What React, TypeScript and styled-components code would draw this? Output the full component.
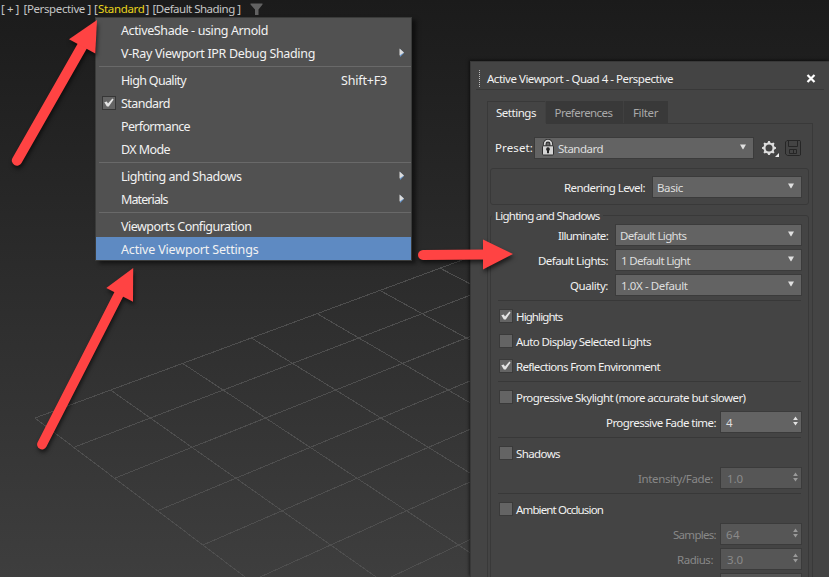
import React, { useLayoutEffect, useRef, useState } from "react";
import styled, { createGlobalStyle, css } from "styled-components";

const GlobalStyle = createGlobalStyle`
  body { margin: 0; background: #2c2c2c; }
  * { box-sizing: border-box; }
`;

/* ---------- text set to an exact measure ---------- */

const TextSpan = styled.span<{ $w: number; $ls: number }>`
  display: block;
  flex: none;
  width: ${(p) => p.$w}px;
  letter-spacing: ${(p) => p.$ls}px;
  white-space: pre;
`;

function Label({ w, children }: { w: number; children: string }) {
  const ref = useRef<HTMLSpanElement>(null);
  const [ls, setLs] = useState(0);
  useLayoutEffect(() => {
    if (!ref.current) return;
    const range = document.createRange();
    range.selectNodeContents(ref.current);
    const natural = range.getBoundingClientRect().width;
    const target = w > 30 ? w - 1 : w;
    setLs((target - natural) / children.length);
  }, []);
  return (
    <TextSpan ref={ref} $w={w} $ls={ls}>
      {children}
    </TextSpan>
  );
}

/* ---------- viewport ---------- */

const Viewport = styled.main`
  position: relative;
  width: 829px;
  height: 577px;
  overflow: hidden;
  background: linear-gradient(#1b1b1b, #3e3e3e);
  font-family: "Noto Sans", "DejaVu Sans", sans-serif;
  font-size: 11.5px;
  line-height: 18px;
  color: #f2f2f2;
`;

const Layer = styled.svg`
  position: absolute;
  inset: 0;
  pointer-events: none;
`;

const ViewportLabels = styled.header`
  position: relative;
  display: flex;
  height: 18px;
  padding-left: 1px;
  font-size: 11.5px;
  color: #c6c6c6;
`;

const LabelPart = styled.div<{ $gap: number; $active?: boolean }>`
  display: flex;
  margin-right: ${(p) => p.$gap}px;
  b { font-weight: 400; color: #ead51c; }
`;

const FunnelIcon = styled.svg`
  margin: 3px 0 0 -1px;
`;

function gridPoint(i: number, j: number): [number, number] {
  const m = j - i;
  const w = 1 - 0.0245 * m;
  return [(35 + 78.3 * i + 37 * j) / w, (418 + 18.4 * m) / w];
}

function Grid() {
  const lines: [number, number, number, number][] = [];
  for (let k = 0; k <= 12; k++) {
    lines.push([...gridPoint(k, 0), ...gridPoint(k, 12)]);
    lines.push([...gridPoint(0, k), ...gridPoint(12, k)]);
  }
  return (
    <Layer width="829" height="577" shapeRendering="crispEdges">
      {lines.map(([x1, y1, x2, y2], n) => (
        <line key={n} x1={x1} y1={y1} x2={x2} y2={y2} stroke="#4e4e4e" strokeWidth="1" />
      ))}
    </Layer>
  );
}

/* ---------- shading menu ---------- */

const Menu = styled.ul`
  position: absolute;
  left: 95px;
  top: 17px;
  width: 317px;
  margin: 0;
  padding: 0;
  list-style: none;
  border: 1px solid #3a3b3a;
  background: #515151;
  box-shadow: 4px 3px 4px rgba(0, 0, 0, 0.5);
  font-size: 12.5px;
  line-height: 23px;
`;

const MenuItem = styled.li<{ $hot?: boolean }>`
  display: flex;
  align-items: center;
  height: 23px;
  padding: 1px 6px 0 0;
  background: ${(p) => (p.$hot ? "#5e8ac2" : "transparent")};
`;

const MenuGutter = styled.div`
  flex: none;
  width: 25px;
  padding-left: 6px;
`;

const MenuSpacer = styled.div`
  flex: 1;
`;

const Shortcut = styled.div`
  margin-right: 17px;
`;

const MenuRule = styled.li`
  height: 4px;
  padding: 2px 0 0 3px;
  &::after {
    content: "";
    display: block;
    height: 1px;
    background: #696969;
  }
`;

const CheckBox = styled.div<{ $menu?: boolean }>`
  flex: none;
  width: 14px;
  height: 14px;
  border: 1px solid ${(p) => (p.$menu ? "#363636" : "#3a3a3a")};
  background: #646464;
  svg { display: block; }
`;

function Check({ on, menu }: { on?: boolean; menu?: boolean }) {
  return (
    <CheckBox $menu={menu}>
      {on && (
        <svg width="12" height="12" viewBox="0 0 12 12">
          <path d="M1.3 5.2 L3.8 4.6 L5 6.4 L9.4 1.6 L10.6 2.4 L5.8 9.4 L3.9 9.4 Z" fill="#e4e4e4" />
        </svg>
      )}
    </CheckBox>
  );
}

function SubmenuArrow() {
  return (
    <svg width="6" height="10" viewBox="0 0 6 10">
      <path d="M1 1 L5 5 L1 9 Z" fill="#6a9ad2" />
      <path d="M0.5 0.5 L5 4.6 L0.5 7.5 Z" fill="#dcdcdc" />
    </svg>
  );
}

type Entry = { text: string; w: number; sub?: boolean; key?: string; checked?: boolean; hot?: boolean } | null;

const entries: Entry[] = [
  { text: "ActiveShade - using Arnold", w: 148 },
  { text: "V-Ray Viewport IPR Debug Shading", w: 195, sub: true },
  null,
  { text: "High Quality", w: 66, key: "Shift+F3" },
  { text: "Standard", w: 50, checked: true },
  { text: "Performance", w: 70 },
  { text: "DX Mode", w: 50 },
  null,
  { text: "Lighting and Shadows", w: 121.5, sub: true },
  { text: "Materials", w: 47.5, sub: true },
  null,
  { text: "Viewports Configuration", w: 131.5 },
  { text: "Active Viewport Settings", w: 138.5, hot: true },
];

function ShadingMenu() {
  return (
    <Menu>
      {entries.map((e, n) =>
        e === null ? (
          <MenuRule key={n} />
        ) : (
          <MenuItem key={n} $hot={e.hot}>
            <MenuGutter>{e.checked && <Check on menu />}</MenuGutter>
            <Label w={e.w}>{e.text}</Label>
            <MenuSpacer />
            {e.key && (
              <Shortcut>
                <Label w={47}>{e.key}</Label>
              </Shortcut>
            )}
            {e.sub && <SubmenuArrow />}
          </MenuItem>
        )
      )}
    </Menu>
  );
}

/* ---------- settings panel ---------- */

const Panel = styled.aside`
  position: absolute;
  left: 470px;
  top: 61px;
  width: 359px;
  height: 516px;
  overflow: hidden;
  border: solid #383838;
  border-width: 1px 0 0 1px;
  background: #444444;
  box-shadow: -1px -1px 3px rgba(0, 0, 0, 0.55);
`;

const TitleBar = styled.header`
  display: flex;
  align-items: center;
  height: 28px;
  margin: 0 5px;
  padding: 6px 8px 0 2px;
  border-bottom: 1px solid #383838;
`;

const Grip = styled.div`
  width: 3px;
  height: 17px;
  margin-right: 6px;
  background: conic-gradient(#bdbdbd 25%, transparent 0) 0 0 / 2px 2px;
`;

const Spacer = styled.div`
  flex: 1;
`;

const Tabs = styled.nav`
  display: flex;
  margin: 11px 16px 0 16px;
`;

const Tab = styled.div<{ $w: number; $active?: boolean }>`
  display: flex;
  justify-content: center;
  align-items: center;
  width: ${(p) => p.$w}px;
  height: 22px;
  padding-top: ${(p) => (p.$active ? 0 : 2)}px;
  ${(p) =>
    p.$active
      ? css`
          border: solid #393939;
          border-width: 1px 0 0 1px;
        `
      : css`
          color: #a9a9a9;
          background: #393939;
          & + & { box-shadow: inset 1px 0 #404040; }
        `}
`;

const TabBody = styled.section`
  width: 326px;
  height: 460px;
  margin-left: 16px;
  padding: 14px 3px 0 2px;
  border: solid #393939;
  border-width: 0 1px;
  background: linear-gradient(#393939, #393939) 58px 0 / 268px 1px no-repeat;
`;

const PresetRow = styled.div`
  display: flex;
  align-items: center;
  height: 22px;
  padding-left: 5px;
  & > svg { flex: none; }
`;

const PresetTools = styled.div`
  display: flex;
  align-items: center;
  gap: 5px;
  margin-left: 7px;
`;

const Combo = styled.div<{ $w: number; $pad?: number }>`
  display: flex;
  align-items: center;
  flex: none;
  width: ${(p) => p.$w}px;
  height: 22px;
  padding: 1px 6px 0 ${(p) => p.$pad ?? 4}px;
  border: 1px solid #3b3b3b;
  background: #636363;
  color: #dedede;
`;

const Spin = styled(Combo)<{ $off?: boolean }>`
  padding-right: 2px;
  ${(p) => p.$off && css`background: #565656; color: #8a8a8a;`}
`;

const Group = styled.section<{ $top: number; $h: number }>`
  width: 319px;
  height: ${(p) => p.$h}px;
  margin-top: ${(p) => p.$top}px;
  border: 1px solid #393939;
  border-radius: 3px;
`;

const GroupTitle = styled.h2`
  display: table;
  height: 18px;
  margin: -9px 0 0 1px;
  padding: 0 2px 0 3px;
  background: #444444;
  font-size: inherit;
  font-weight: 400;
`;

const Field = styled.div<{ $top?: number; $gap?: number; $off?: boolean }>`
  display: flex;
  justify-content: flex-end;
  align-items: center;
  height: 22px;
  margin-top: ${(p) => p.$top ?? 3}px;
  padding-right: 6px;
  gap: ${(p) => p.$gap ?? 6}px;
  color: ${(p) => (p.$off ? "#888888" : "inherit")};
  & > span { padding-top: 1px; }
`;

const Option = styled.div<{ $top: number }>`
  display: flex;
  align-items: center;
  height: 14px;
  margin: ${(p) => p.$top}px 0 0 8px;
  gap: 3px;
  span { margin-top: 2px; }
`;

const Rule = styled.hr<{ $top: number }>`
  height: 1px;
  margin: ${(p) => p.$top}px 7px 0;
  border: 0;
  background: #383838;
`;

const ArrowGlyph = styled.svg`
  margin-top: -3px;
`;

function DownArrow() {
  return (
    <ArrowGlyph width="8" height="6" viewBox="0 0 8 6">
      <path d="M1 0.5 H7 L4.3 5.3 H3.7 Z" fill="#e0e0e0" />
    </ArrowGlyph>
  );
}

function Select({ w, text, textW, pad }: { w: number; text: string; textW: number; pad?: number }) {
  return (
    <Combo $w={w} $pad={pad}>
      <Label w={textW}>{text}</Label>
      <Spacer />
      <DownArrow />
    </Combo>
  );
}

function Spinner({ text, textW, pad, off }: { text: string; textW: number; pad: number; off?: boolean }) {
  return (
    <Spin $w={82} $pad={pad} $off={off}>
      <Label w={textW}>{text}</Label>
      <Spacer />
      <ArrowGlyph width="7" height="10" viewBox="0 0 7 10">
        <path d="M3.5 0.5 L5.9 3.9 H1.1 Z M3.5 9.5 L5.9 6.1 H1.1 Z" fill={off ? "#9a9a9a" : "#e2e2e2"} />
      </ArrowGlyph>
    </Spin>
  );
}

const LockIcon = styled.svg`
  margin: -2px 3px 0 0;
`;

function Lock() {
  return (
    <LockIcon width="14" height="17" viewBox="0 0 14 17">
      <path d="M3.7 8 V5 A3.3 3.3 0 0 1 10.3 5 V8" fill="none" stroke="#2c2c2c" strokeWidth="3.6" />
      <path d="M3.7 8 V5 A3.3 3.3 0 0 1 10.3 5 V8" fill="none" stroke="#d4d4d4" strokeWidth="1.7" />
      <rect x="1.5" y="6.8" width="11" height="9.2" rx="1" fill="#d4d4d4" stroke="#2c2c2c" strokeWidth="1" />
      <path d="M7 8.3 A1.9 1.9 0 0 1 8 11.8 V14.2 H6 V11.8 A1.9 1.9 0 0 1 7 8.3Z" fill="#242424" />
    </LockIcon>
  );
}

function Gear() {
  const teeth = [0, 45, 90, 135, 180, 225, 270, 315];
  return (
    <svg width="19" height="20" viewBox="0 0 19 20">
      {teeth.map((a) => (
        <path key={a} d="M6.1 5 L7.2 2 H8.8 L9.9 5 Z" fill="#dddddd" transform={`translate(0 1) rotate(${a} 8 9)`} />
      ))}
      <circle cx="8" cy="10" r="4.5" fill="none" stroke="#dddddd" strokeWidth="2" />
      <path d="M18 15 V19 H14 Z" fill="#ededed" />
    </svg>
  );
}

function Disk() {
  return (
    <svg width="17" height="17" viewBox="0 0 17 17" fill="none" stroke="#262626">
      <path d="M2 0.5 H15 L15.5 1.5 V15 L14.5 15.5 H2.5 L0.5 14 V2 Z" />
      <path d="M3.5 0.5 V6.5 H12.5 V0.5 M4.5 9.5 H11.5 V13.5 H4.5 Z M8.5 9.5 V13.5" />
    </svg>
  );
}

function SettingsPanel() {
  return (
    <Panel>
      <TitleBar>
        <Grip />
        <Label w={187}>Active Viewport - Quad 4 - Perspective</Label>
        <Spacer />
        <svg width="10" height="9" viewBox="0 0 10 9">
          <path d="M1.5 1 L8.5 8 M8.5 1 L1.5 8" stroke="#ffffff" strokeWidth="2.2" />
        </svg>
      </TitleBar>
      <Tabs>
        <Tab $w={58} $active><Label w={41}>Settings</Label></Tab>
        <Tab $w={78}><Label w={59}>Preferences</Label></Tab>
        <Tab $w={45}><Label w={25}>Filter</Label></Tab>
      </Tabs>
      <TabBody>
        <PresetRow>
          <Label w={39}>Preset:</Label>
          <Combo $w={220} $pad={6}>
            <Lock />
            <Label w={46}>Standard</Label>
            <Spacer />
            <DownArrow />
          </Combo>
          <PresetTools>
            <Gear />
            <Disk />
          </PresetTools>
        </PresetRow>
        <Group $top={9} $h={37}>
          <Field $top={7} $gap={6}>
            <Label w={82}>Rendering Level:</Label>
            <Select w={150} text="Basic" textW={26} />
          </Field>
        </Group>
        <Group $top={10} $h={420}>
          <GroupTitle><Label w={105.5}>Lighting and Shadows</Label></GroupTitle>
          <Field $top={-1}>
            <Label w={51}>Illuminate:</Label>
            <Select w={187} text="Default Lights" textW={67.5} />
          </Field>
          <Field>
            <Label w={71}>Default Lights:</Label>
            <Select w={187} text="1 Default Light" textW={70} pad={5} />
          </Field>
          <Field>
            <Label w={39}>Quality:</Label>
            <Select w={187} text="1.0X - Default" textW={67.5} pad={5} />
          </Field>
          <Rule $top={4} />
          <Option $top={8}><Check on /><Label w={47.5}>Highlights</Label></Option>
          <Option $top={11}><Check /><Label w={136}>Auto Display Selected Lights</Label></Option>
          <Option $top={11}><Check on /><Label w={145}>Reflections From Environment</Label></Option>
          <Rule $top={8} />
          <Option $top={8}><Check /><Label w={230.5}>Progressive Skylight (more accurate but slower)</Label></Option>
          <Field $top={7} $gap={3}>
            <Label w={111}>Progressive Fade time:</Label>
            <Spinner text="4" textW={8} pad={5} />
          </Field>
          <Rule $top={4} />
          <Option $top={8}><Check /><Label w={45}>Shadows</Label></Option>
          <Field $top={7} $off>
            <Label w={76}>Intensity/Fade:</Label>
            <Spinner text="1.0" textW={16} pad={6} off />
          </Field>
          <Rule $top={4} />
          <Option $top={8}><Check /><Label w={88}>Ambient Occlusion</Label></Option>
          <Field $top={7} $gap={3} $off>
            <Label w={44}>Samples:</Label>
            <Spinner text="64" textW={14} pad={5} off />
          </Field>
          <Field $off>
            <Label w={37}>Radius:</Label>
            <Spinner text="3.0" textW={16} pad={6} off />
          </Field>
          <Field $off>
            <Spin $w={82} $off />
          </Field>
        </Group>
      </TabBody>
    </Panel>
  );
}

/* ---------- callout arrows ---------- */

const ArrowLayer = styled(Layer)`
  filter: drop-shadow(1px 3px 2px rgba(0, 0, 0, 0.6));
`;

function Arrows() {
  return (
    <ArrowLayer width="829" height="577" fill="#ff4343" stroke="#ff4343" strokeLinecap="round">
      <path d="M17 160.5 L84 43" strokeWidth="10.4" />
      <path d="M97 20 L69 39.3 L95.3 53.5 Z" stroke="none" />
      <path d="M42 444.5 L121 290" strokeWidth="9.8" />
      <path d="M133.2 268 L106.3 288 L133 301.7 Z" stroke="none" />
      <path d="M423 255 L486 254.6" strokeWidth="10" />
      <path d="M513 254 L483 239.5 V269.5 Z" stroke="none" />
    </ArrowLayer>
  );
}

export default function App() {
  return (
    <>
      <GlobalStyle />
      <Viewport>
        <Grid />
        <ViewportLabels>
          <LabelPart $gap={2}><Label w={20.5}>[+]</Label></LabelPart>
          <LabelPart $gap={2}><Label w={68.5}>[Perspective ]</Label></LabelPart>
          <LabelPart $gap={3}>
            <Label w={4}>[</Label>
            <b><Label w={47.5}>Standard</Label></b>
            <Label w={4}>]</Label>
          </LabelPart>
          <LabelPart $gap={9}><Label w={89}>[Default Shading ]</Label></LabelPart>
          <FunnelIcon width="14" height="13" viewBox="0 0 14 13">
            <path d="M0.5 0.5 H12.5 V1.6 L8.5 6.5 V12 H5 V6.5 L0.5 1.6 Z" fill="#626262" />
          </FunnelIcon>
        </ViewportLabels>
        <ShadingMenu />
        <SettingsPanel />
        <Arrows />
      </Viewport>
    </>
  );
}
